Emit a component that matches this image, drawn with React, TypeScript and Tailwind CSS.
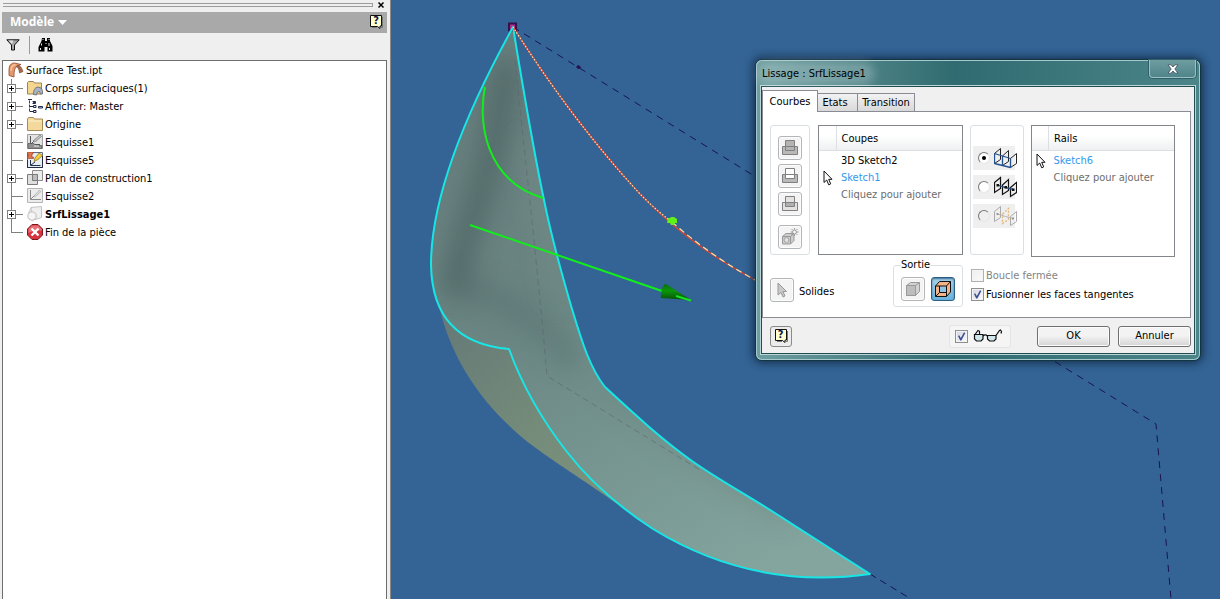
import React, { useState } from 'react';

type Kids = { children?: React.ReactNode };

/* ---------- shared controls ---------- */

function Tick({ label, checked, disabled, hidden }: { label: string; checked?: boolean; disabled?: boolean; hidden?: boolean }) {
  const [on, setOn] = useState(!!checked);
  return (
    <label className={disabled ? 'flex items-center gap-[2px] text-[#838383]' : 'flex items-center gap-[2px]'}>
      <span className="grid h-[13px] w-[13px] shrink-0">
        <input
          type="checkbox"
          aria-label={hidden ? label : undefined}
          checked={on}
          disabled={disabled}
          onChange={() => setOn(!on)}
          className="col-start-1 row-start-1 h-[13px] w-[13px] appearance-none border border-[#8e8f8f] bg-linear-to-br from-[#cfd3dc] to-white shadow-[inset_0_0_0_1px_#f4f4f4] disabled:border-[#b1b1b1] disabled:from-[#efefef] disabled:to-[#fafafa]"
        />
        {on && (
          <svg viewBox="0 0 13 13" className="pointer-events-none col-start-1 row-start-1 h-[13px] w-[13px]">
            <path d="M3 6l1.2-.8L5.800 8 9 2.300l1.300.6L6.400 10.500H5.200z" fill="#3c4e93" />
          </svg>
        )}
      </span>
      {!hidden && <span className="whitespace-nowrap">{label}</span>}
    </label>
  );
}

function ToolButton({ label, active, children }: Kids & { label: string; active?: boolean }) {
  return (
    <button
      type="button"
      aria-label={label}
      className={
        active
          ? 'flex h-6 w-6 shrink-0 items-center justify-center rounded-[3px] border border-[#2c5f87] bg-linear-to-b from-[#a9d2ea] to-[#68b3de] shadow-[inset_0_1px_2px_#3b6f95]'
          : 'flex h-6 w-6 shrink-0 items-center justify-center rounded-[3px] border border-[#b3b6b8] bg-[#f4f4f4] shadow-[inset_0_0_0_1px_#fcfcfc]'
      }
    >
      {children}
    </button>
  );
}

function HelpIcon() {
  return (
    <span className="grid h-4 w-[15px] shrink-0">
      <svg viewBox="0 0 15 16" className="col-start-1 row-start-1 h-4 w-[15px]">
        <path d="M1.500 1.500h11v10.500h-1.500v2.500L8.500 12.500h-7z" fill="#ffffcf" stroke="#111" />
        <path d="M13.500 3v10.500h-2M3 13.500h5" fill="none" stroke="#777" />
      </svg>
      <span className="col-start-1 row-start-1 pr-px text-center text-[11px] leading-[14px] font-bold text-[#111144]">?</span>
    </span>
  );
}

/* ---------- browser panel ---------- */

const icons = {
  surface: (
    <svg viewBox="0 0 16 16" className="h-4 w-4">
      <path d="M1 13.500V8C1 3.500 3 1 6.500 1L13 2.500 9.500 4C7 5 6 8 6 15z" fill="#e8976a" stroke="#8a4a2c" strokeWidth=".8" />
      <path d="M9.500 3.500C12 3.500 13.500 5 15 9.500l-3.500 1.500c-.5-3.500-1-5.500-3-6z" fill="#ae6a4b" stroke="#684030" strokeWidth=".6" />
      <path d="M3 9c0-4 1.500-6 4.500-6.500" fill="none" stroke="#f7c8a6" strokeWidth="1.300" />
    </svg>
  ),
  folderBody: (
    <svg viewBox="0 0 16 16" className="h-4 w-4">
      <path d="M.5 2.500l1-1h5l1 1.500h7v11H.5z" fill="#f4d68f" stroke="#9a8358" />
      <path d="M6.500 14.500c0-4 1-7 4.500-7.500l3 1c1.300 1.500 1.800 3 1.500 6h-2l-1-2.500c-2 0-2.500 1-3 3.500z" fill="#aab3c4" stroke="#5b6473" strokeWidth=".8" />
    </svg>
  ),
  view: (
    <svg viewBox="0 0 16 16" className="h-4 w-4">
      <path d="M2.500 2.500v10.500M9 4.500H6" fill="none" stroke="#333b52" strokeDasharray="3 1" />
      <path d="M1 1.500h4M5.500 3.500h3v2h-3M2.500 8.500h4M2.500 13.500h4" fill="none" stroke="#1f2a4c" />
      <path d="M6.500 7.500h2.500v2H6.500zM11.500 8.500h4v1.500h-4zM6.500 12.500h2.500v2H6.500z" fill="#dfe5f3" stroke="#1f2a4c" />
    </svg>
  ),
  folder: (
    <svg viewBox="0 0 16 16" className="h-4 w-4">
      <path d="M.5 3l1-1.500h5l1 1.500h8v11.500H.5z" fill="#f4d99c" stroke="#a78b57" />
      <path d="M1 5h14" stroke="#fdf0cc" />
    </svg>
  ),
  sketchUsed: (
    <svg viewBox="0 0 16 16" className="h-4 w-4">
      <path d="M.5.5h15v14H.5z" fill="#e3e3e3" stroke="#a0a0a0" />
      <path d="M3.500 2v8.500H13M3.500 10.500L9 5" fill="none" stroke="#555" />
      <path d="M6 7l7-6 1.500 1.500L8 8z" fill="#c4c4c4" stroke="#777" strokeWidth=".7" />
      <path d="M1 9.500h6l2 2h6v3H1z" fill="#8f8f8f" stroke="#555" strokeWidth=".7" />
      <path d="M7 12h5" stroke="#f0f0f0" />
    </svg>
  ),
  sketch3d: (
    <svg viewBox="0 0 16 16" className="h-4 w-4">
      <path d="M.5.5h15v15H.5z" fill="#e8ecf3" stroke="#606a80" />
      <path d="M3.500 8v5.500h10M4 13l4-3" fill="none" stroke="#203050" />
      <path d="M7 9.500l1-3.500 4-5 3.500 2.500L11 7.500z" fill="#f5cf3d" stroke="#8a6a14" strokeWidth=".7" />
      <path d="M0 0h6v2H5v3h1.500v1.500H0V5h1V2H0z" fill="#d9744e" stroke="#973c22" strokeWidth=".6" />
      <path d="M15.500 4v11.500H.5V8" fill="none" stroke="#222b40" />
    </svg>
  ),
  plane: (
    <svg viewBox="0 0 16 16" className="h-4 w-4">
      <path d="M5.500.5h10v10h-10z" fill="#ececec" stroke="#8d8d8d" />
      <path d="M.5 4.500h10v10H.5z" fill="#d6d6d6" fillOpacity=".8" stroke="#7a7a7a" />
      <path d="M5.500 4.500h5v6h-5z" fill="#bdbdbd" stroke="#7a7a7a" />
    </svg>
  ),
  sketchGrey: (
    <svg viewBox="0 0 16 16" className="h-4 w-4">
      <path d="M.5.500h15v14H.5z" fill="#ececec" stroke="#b4b4b4" />
      <path d="M3.500 2v9.500H14M3.500 11.500L8 7" fill="none" stroke="#8a8a8a" />
      <path d="M7 8l5.500-6L14 3.500 8.500 8.500z" fill="#dcdcdc" stroke="#aaa" strokeWidth=".7" />
    </svg>
  ),
  loft: (
    <svg viewBox="0 0 16 16" className="h-4 w-4">
      <path d="M4 1.500L14.500.500v11L10 13 5 14z" fill="#efefef" stroke="#c3c3c3" />
      <circle cx="5" cy="10" r="4.200" fill="#f5f5f5" stroke="#bcbcbc" />
      <path d="M1.500 7.500L4 1.500" stroke="#c9c9c9" />
    </svg>
  ),
  end: (
    <svg viewBox="0 0 16 16" className="h-4 w-4">
      <path d="M5 .5h6L15.500 5v6L11 15.500H5L.5 11V5z" fill="#d8323c" stroke="#7a1a20" />
      <path d="M5 1.500h6l3.500 3.500v2c-5-1-9 0-13 2V5z" fill="#ee8b8f" fillOpacity=".7" />
      <path d="M4.500 4.500l7 7M11.500 4.500l-7 7" stroke="#fff" strokeWidth="2.400" />
    </svg>
  ),
};

const tree: { label: string; icon: keyof typeof icons; expandable?: boolean; bold?: boolean }[] = [
  { label: 'Corps surfaciques(1)', icon: 'folderBody', expandable: true },
  { label: 'Afficher: Master', icon: 'view', expandable: true },
  { label: 'Origine', icon: 'folder', expandable: true },
  { label: 'Esquisse1', icon: 'sketchUsed' },
  { label: 'Esquisse5', icon: 'sketch3d' },
  { label: 'Plan de construction1', icon: 'plane', expandable: true },
  { label: 'Esquisse2', icon: 'sketchGrey' },
  { label: 'SrfLissage1', icon: 'loft', expandable: true, bold: true },
  { label: 'Fin de la pièce', icon: 'end' },
];

function Branch({ expandable, last }: { expandable?: boolean; last: boolean }) {
  return (
    <svg viewBox="0 0 24 18" className="h-[18px] w-6 shrink-0" shapeRendering="crispEdges">
      <path d={last ? 'M8.500 0v9.500H20' : 'M8.500 0v18M8.500 9.500H20'} fill="none" stroke="#808080" />
      {expandable && (
        <>
          <path d="M4.500 5.500h8v8h-8z" fill="#fff" stroke="#808080" />
          <path d="M6 9.500h5M8.500 7v5" stroke="#000" />
        </>
      )}
    </svg>
  );
}

function BrowserPanel() {
  return (
    <aside className="flex w-[391px] shrink-0 flex-col border-r border-[#8a8a8a] bg-[#efefef] pr-[3px] pl-[2px]">
      <div className="flex h-3 items-center gap-1 pr-[2px] pb-[3px] pl-px">
        <div className="h-1 flex-1 border-y border-r border-[#9c9c9c]" />
        <button type="button" aria-label="Fermer" className="flex h-2 w-2 items-center justify-center">
          <svg viewBox="0 0 8 8" className="h-2 w-2">
            <path d="M1.500 1.500l5 5M6.500 1.500l-5 5" stroke="#000" strokeWidth="1.500" />
          </svg>
        </button>
      </div>
      <div className="flex h-[21px] items-center justify-between bg-[#a9a9a9] pr-[3px] pb-px pl-2 text-white">
        <button type="button" className="flex items-center gap-1 font-['Open_Sans',sans-serif] text-[12px] leading-4 font-bold">
          Modèle
          <svg viewBox="0 0 9 5" className="h-[5px] w-[9px]">
            <path d="M0 0h9L4.500 5z" fill="#fff" />
          </svg>
        </button>
        <button type="button" aria-label="Aide" className="text-black">
          <HelpIcon />
        </button>
      </div>
      <div className="flex h-[27px] items-center pb-1 pl-1">
        <button type="button" aria-label="Filtrer">
          <svg viewBox="0 0 14 12" className="h-3 w-[14px]">
            <path d="M.8.800h12.400L8.500 6v5h-3V6z" fill="#a4a4a4" stroke="#111" />
            <path d="M2.500 1.500h5L6 5z" fill="#e0e0e0" />
          </svg>
        </button>
        <div className="ml-[9px] h-[18px] w-px bg-[#9a9a9a]" />
        <button type="button" aria-label="Rechercher" className="ml-2">
          <svg viewBox="0 0 16 14" className="h-[14px] w-4">
            <path d="M4 0h3v3h2V0h3v3l2.500 5v5.500H9.500V9h-3v4.500H.5V9L3.500 3z" fill="#000" />
            <path d="M4.500 1.500h1M10.500 1.500h1M3.500 5.500v2M11 5v3M2.500 10v2M11.500 10v2M7.500 5.500h1" stroke="#e5e5e5" />
          </svg>
        </button>
      </div>
      <div className="flex-1 border border-b-0 border-[#6e6e6e] bg-white">
        <div className="flex h-[18px] items-center gap-[2px] pl-[5px]">
          {icons.surface}
          <span className="pt-[2px]">Surface Test.ipt</span>
        </div>
        <ul>
          {tree.map((n, i) => (
            <li key={n.label} className="flex h-[18px] items-center">
              <Branch expandable={n.expandable} last={i === tree.length - 1} />
              {icons[n.icon]}
              <span className={n.bold ? 'pt-[2px] pl-[2px] font-bold' : 'pt-[2px] pl-[2px]'}>{n.label}</span>
            </li>
          ))}
        </ul>
      </div>
    </aside>
  );
}

/* ---------- 3D scene ---------- */

const upper =
  'M513 27C470 105 431 195 431 265C432 320 462 345 509 349C522 385 542 420 567 452C595 488 630 514 653 529C725 573 800 584 870 574L767 508C740 491 716 478 692 461C660 438 632 412 605 387C590 368 582 342 572 309C562 275 552 240 544 200C533 148 523 88 513 27Z';

function Scene() {
  return (
    <svg viewBox="391 0 829 599" preserveAspectRatio="xMinYMin slice" className="h-full w-full" role="img" aria-label="Surface lissée">
      <defs>
        <linearGradient id="top" gradientUnits="userSpaceOnUse" x1="470" y1="120" x2="780" y2="560">
          <stop offset="0" stopColor="#677f7e" />
          <stop offset=".35" stopColor="#6a8582" />
          <stop offset=".65" stopColor="#769590" />
          <stop offset="1" stopColor="#84a49e" />
        </linearGradient>
        <linearGradient id="belly" gradientUnits="userSpaceOnUse" x1="445" y1="330" x2="590" y2="490">
          <stop offset="0" stopColor="#667b77" />
          <stop offset=".6" stopColor="#748b7a" />
          <stop offset="1" stopColor="#7b917c" />
        </linearGradient>
        <linearGradient id="cone" x1="0" y1="0" x2="0" y2="1">
          <stop offset="0" stopColor="#0a6e0a" />
          <stop offset=".45" stopColor="#0b960b" />
          <stop offset="1" stopColor="#064f06" />
        </linearGradient>
        <filter id="soft" filterUnits="userSpaceOnUse" x="391" y="0" width="600" height="599">
          <feGaussianBlur stdDeviation="12" />
        </filter>
        <clipPath id="topClip">
          <path d={upper} />
        </clipPath>
      </defs>
      <path d="M513 27L1156 424L1171 599" fill="none" stroke="#1a1450" strokeDasharray="7 6" />
      <path d="M870 574L911 599" fill="none" stroke="#1a1450" strokeDasharray="7 5" />
      <path d="M438 300C450 365 492 415 533 446C560 466 590 484 630 513L600 470L509 345Z" fill="url(#belly)" />
      <path d={upper} fill="url(#top)" />
      <g clipPath="url(#topClip)">
        <path d="M507 60C500 120 490 170 470 225C462 250 456 270 455 295" fill="none" stroke="#48605f" strokeWidth="26" opacity=".65" filter="url(#soft)" />
        <path d="M455 285C495 290 540 320 575 365" fill="none" stroke="#4d6668" strokeWidth="20" opacity=".4" filter="url(#soft)" />
        <path d="M530 140C538 200 548 250 562 300" fill="none" stroke="#7a948f" strokeWidth="14" opacity=".5" filter="url(#soft)" />
        <path d="M605 385L692 455L790 520" fill="none" stroke="#667d77" strokeWidth="12" opacity=".5" filter="url(#soft)" />
        <path d="M515 60C522 130 530 200 535 250C540 300 544 340 547 376L700 470" fill="none" stroke="#5d6470" strokeDasharray="6 4" opacity=".6" />
      </g>
      <path d="M509 23.500h7v7h-7z" fill="#a8328c" stroke="#36104a" strokeWidth="2" />
      <path d={upper} fill="none" stroke="#18e6e6" strokeWidth="2" strokeLinejoin="round" />
      <path d="M485 87C478 120 484 180 543 198" fill="none" stroke="#12ee1c" strokeWidth="2" />
      <path d="M513 27C550 85 590 140 640 194C675 230 710 256 757 281" fill="none" stroke="#d8452f" strokeWidth="1.400" />
      <path d="M513 27C550 85 590 140 640 194C650 204 661 214 672 222" fill="none" stroke="#fbe9b0" strokeWidth="1.200" strokeDasharray="1.500 1.700" />
      <path d="M672 222C697 244 725 264 757 281" fill="none" stroke="#fbe9b0" strokeWidth="1.200" strokeDasharray="6 4" />
      <path d="M576 67l2-2 2 1 1 2-3 1z" fill="#2a1050" />
      <path d="M668 218h2l1-1h3l3 2v4h-2l-1 2h-3l-1-2h-3z" fill="#5df01a" />
      <path d="M470 225L662 291" stroke="#12ee1c" strokeWidth="2" />
      <path d="M665 283.500L691 300L661 298Q660 290 665 283.500Z" fill="url(#cone)" />
      <path d="M676 296L691 300.500" stroke="#19e222" strokeWidth="2" />
    </svg>
  );
}

/* ---------- dialog ---------- */

function GroupBox({ children, className = '' }: Kids & { className?: string }) {
  return <div className={'rounded-[3px] border border-[#d9e0e4] ' + className}>{children}</div>;
}

function PieceIcon({ top, bottom, overlap }: { top: string; bottom: string; overlap: string }) {
  return (
    <svg viewBox="0 0 16 16" className="h-4 w-4">
      <path d="M.5 6.500h15v8H.5z" fill={bottom} stroke="#808080" />
      <path d="M3.500.5h9v6h-9z" fill={top} stroke="#808080" />
      <path d="M3.500 6.500h9v4h-9z" fill={overlap} stroke="#808080" />
    </svg>
  );
}

function PickCursor() {
  return (
    <svg viewBox="0 0 10 16" className="h-4 w-[10px]">
      <path d="M1 1v11.500l2.700-2.500 2 4.800 2-.9-2-4.600H9z" fill="#fff" stroke="#111" />
    </svg>
  );
}

function CurveList({ title, rows, pick, tall }: { title: string; rows: { text: string; tone: string }[]; pick: number; tall?: boolean }) {
  return (
    <div className={tall ? 'h-[132px] flex-1 border border-[#82858a] bg-white' : 'h-[130px] flex-1 border border-[#82858a] bg-white'}>
      <table className="w-full border-collapse text-left">
        <thead>
          <tr className="h-6 bg-linear-to-b from-white from-40% to-[#eff0f2]">
            <td className="w-[17px] border-r border-b border-[#dcdfe3] p-0" />
            <th scope="col" className="border-b border-[#dcdfe3] p-0 pt-[2px] pl-[5px] font-normal">{title}</th>
          </tr>
        </thead>
        <tbody>
          <tr className="h-[2px]">
            <td className="p-0" />
            <td className="p-0" />
          </tr>
          {rows.map((r, i) => (
            <tr key={r.text} className="h-[17px]">
              <td className="p-0 pl-1">{i === pick && <span className="flex h-[17px] items-center"><PickCursor /></span>}</td>
              <td className={'p-0 pl-[5px] leading-[17px] whitespace-nowrap ' + r.tone}>{r.text}</td>
            </tr>
          ))}
        </tbody>
      </table>
    </div>
  );
}

function Mode({ id, label, disabled, checked, onPick, children }: Kids & { id: string; label: string; disabled?: boolean; checked: boolean; onPick: () => void }) {
  return (
    <label htmlFor={id} className="flex h-6 items-center gap-[4px] bg-[#efefef] pl-[5px]">
      <span className="grid h-3 w-3 shrink-0">
        <input
          id={id}
          type="radio"
          name="mode"
          aria-label={label}
          checked={checked}
          disabled={disabled}
          onChange={onPick}
          className="col-start-1 row-start-1 h-3 w-3 appearance-none rounded-full border border-t-[#777] border-r-[#e6e6e6] border-b-[#e6e6e6] border-l-[#777] bg-white disabled:bg-[#efefef]"
        />
        {checked && <span className="pointer-events-none col-start-1 row-start-1 m-1 rounded-full bg-black" />}
      </span>
      <svg viewBox="0 0 23 22" className="h-[22px] w-[23px] shrink-0">
        {children}
      </svg>
    </label>
  );
}

const outerFrames = 'M.5 6.500L6.500 1.500V12.500L.5 16.500ZM16.500 11.500L22.500 6.500V16.500L16.500 20.500Z';
const middleFrame = 'M8.500 9L14.500 3.500V14.500L8.500 18.500Z';

function TabPage() {
  const [mode, setMode] = useState(0);
  return (
    <div className="h-[207px] border border-[#898c95] bg-white pt-[13px] pr-[15px] pl-[7px]" role="tabpanel">
      <div className="flex items-start">
        <GroupBox className="mr-2 flex h-[130px] w-10 shrink-0 flex-col items-center pt-[10px]">
          <div className="flex flex-col gap-[4px]">
            <ToolButton label="Joindre"><PieceIcon top="#b4b4b4" bottom="#b9b9b9" overlap="#b4b4b4" /></ToolButton>
            <ToolButton label="Couper"><PieceIcon top="#fff" bottom="#b9b9b9" overlap="#fff" /></ToolButton>
            <ToolButton label="Intersection"><PieceIcon top="#e2e2e2" bottom="#e2e2e2" overlap="#b0b0b0" /></ToolButton>
          </div>
          <div className="mt-[9px]">
            <ToolButton label="Nouveau solide">
              <svg viewBox="0 0 18 18" className="h-[18px] w-[18px]">
                <path d="M1.500 8.500L5 5.500h8v7L9.500 16h-8z" fill="#cdcdcd" stroke="#999" />
                <path d="M1.500 8.500h8V16M9.500 8.500L13 5.500" fill="none" stroke="#999" />
                <circle cx="5.500" cy="12" r="2.500" fill="#e0e0e0" stroke="#a5a5a5" />
                <circle cx="13.500" cy="4" r="2" fill="#f4f4f4" stroke="#9a9a9a" />
                <path d="M13.500 0v1.500M13.500 6.500V8M9.500 4H11M16 4h1.500M10.500 1l1 1M16.500 1l-1 1M16.500 7l-1-1M10.500 7l1-1" stroke="#9a9a9a" />
              </svg>
            </ToolButton>
          </div>
        </GroupBox>
        <CurveList
          title="Coupes"
          pick={1}
          rows={[
            { text: '3D Sketch2', tone: 'text-black' },
            { text: 'Sketch1', tone: 'text-[#3399ee]' },
            { text: 'Cliquez pour ajouter', tone: 'text-[#6d6d6d]' },
          ]}
        />
        <GroupBox className="mx-[7px] flex h-[130px] w-[54px] shrink-0 flex-col gap-[5px] pt-[20px] pr-2 pl-[2px]">
          <Mode id="m1" label="Rails" checked={mode === 0} onPick={() => setMode(0)}>
            <path d={outerFrames} fill="none" stroke="#222" />
            <path d={middleFrame} fill="none" stroke="#222" />
            <path d="M.5 6.500l8 2.500 8 2.500M.5 16.500l8 2 8 2M.5 6.500v10M8.500 9v9.500M16.500 11.500v9" fill="none" stroke="#24518f" strokeWidth="1.300" />
          </Mode>
          <Mode id="m2" label="Ligne médiane" checked={mode === 1} onPick={() => setMode(1)}>
            <path d={outerFrames} fill="none" stroke="#111" strokeWidth="1.200" />
            <path d={middleFrame} fill="none" stroke="#111" strokeWidth="1.200" />
            <path d="M3.500 9l8 2.500 8 2" fill="none" stroke="#24518f" strokeWidth="1.300" />
            <path d="M2.500 8h2.500v2.500H2.500zM10.500 10h2.500v2.500h-2.500zM18 12.500h2.500V15H18z" fill="#111" />
          </Mode>
          <Mode id="m3" label="Lissage de zone" disabled checked={mode === 2} onPick={() => setMode(2)}>
            <path d={outerFrames} fill="none" stroke="#ababab" />
            <path d={middleFrame} fill="none" stroke="#e5b77c" strokeWidth="1.300" strokeDasharray="2 1.500" />
            <path d="M3.500 9l8 2.500 8 2" fill="none" stroke="#b5b5b5" />
            <path d="M2.500 8h2v2h-2zM18 12.500h2v2h-2z" fill="#999" />
          </Mode>
        </GroupBox>
        <CurveList
          title="Rails"
          pick={0}
          tall
          rows={[
            { text: 'Sketch6', tone: 'text-[#3399ee]' },
            { text: 'Cliquez pour ajouter', tone: 'text-[#6d6d6d]' },
          ]}
        />
      </div>
      <div className="mt-px flex items-start">
        <div className="flex w-[123px] shrink-0 items-center gap-[5px] pt-5">
          <ToolButton label="Sélectionner les solides">
            <svg viewBox="0 0 14 16" className="h-4 w-[14px]">
              <path d="M3 1v12l3-2.500 2 4.500 2-1-2-4.500h3.500z" fill="#c9c9c9" stroke="#999" />
            </svg>
          </ToolButton>
          <span className="pt-[3px]">Solides</span>
        </div>
        <fieldset className="mr-2 h-[49px] w-[68px] shrink-0 rounded-[3px] border border-[#d9e0e4] px-[7px]">
          <legend className="h-[14px] leading-[14px]">Sortie</legend>
          <div className="flex gap-[6px] pt-[5px]">
            <ToolButton label="Solide">
              <svg viewBox="0 0 18 18" className="h-[18px] w-[18px]">
                <path d="M2.500 5.500l4-3h9v9l-4 4h-9z" fill="#d2d2d2" stroke="#999" />
                <path d="M2.500 5.500h9v10h-9z" fill="#bdbdbd" stroke="#999" />
                <path d="M11.500 5.500l4-3" stroke="#999" />
              </svg>
            </ToolButton>
            <ToolButton label="Surface" active>
              <svg viewBox="0 0 18 18" className="h-[18px] w-[18px]">
                <path d="M1.500 6l4-4.500h11V12l-4 4.500h-11z" fill="#f4b487" stroke="#111" />
                <path d="M5.500 6.500h7v6H5z" fill="#8fc4e6" />
                <path d="M1.500 6h11v10.500M12.500 6l4-4.500M5.500 6v6.500h7M5.500 12.500l-4 4" fill="none" stroke="#111" />
              </svg>
            </ToolButton>
          </div>
        </fieldset>
        <div className="flex flex-col gap-[6px] pt-[11px] leading-[13px]">
          <Tick label="Boucle fermée" disabled />
          <Tick label="Fusionner les faces tangentes" checked />
        </div>
      </div>
    </div>
  );
}

const pushButton =
  'h-[21px] w-[73px] rounded-[3px] border border-[#707070] bg-linear-to-b from-[#f3f3f3] from-45% to-[#d4d4d4] shadow-[inset_0_0_0_1px_#fbfbfb]';

const rearTab = 'h-[18px] border border-b-0 border-l-0 border-[#898c95] bg-linear-to-b from-[#f2f2f2] to-[#d9d9d9] leading-[17px] ';

function LoftDialog() {
  return (
    <section
      aria-label="Lissage : SrfLissage1"
      className="absolute top-[59px] left-[364px] w-[446px] rounded-[7px] border border-[#12353f] bg-[#357176] bg-linear-to-r from-[#6e9ea0] via-[#2f6b70] via-45% to-[#4b858a] shadow-[0_0_8px_2px_rgba(10,25,50,0.7)]"
    >
      <div className="rounded-[6px] px-[4px] pb-[5px] shadow-[inset_0_0_0_1px_#a5c9cc]">
        <header className="flex h-[25px] items-start justify-between pl-[2px]">
          <h1 className="mt-[6px] rounded-full bg-white/20 pr-1 leading-[15px] shadow-[0_0_8px_5px_rgba(255,255,255,0.2)]">Lissage : SrfLissage1</h1>
          <button
            type="button"
            aria-label="Fermer la boîte de dialogue"
            className="flex h-[18px] w-[47px] items-center justify-center rounded-b-[4px] border border-t-0 border-[#9dc0c4] bg-linear-to-b from-[#6f9da0] to-[#4e858b] shadow-[0_0_0_1px_#2f5f68]"
          >
            <svg viewBox="0 0 12 10" className="h-[10px] w-3">
              <path d="M1 .8h3L6 3 8 .8h3L7.800 5 11 9.200H8L6 7 4 9.200H1L4.200 5z" fill="#fff" stroke="#3f4b59" strokeWidth=".8" />
            </svg>
          </button>
        </header>
        <div className="border border-[#bcd6d8]">
          <div className="border border-[#1f4b53] bg-[#f0f0f0] pt-[3px] pr-[3px]">
            <div role="tablist" className="flex items-end">
              <button type="button" role="tab" aria-selected="true" className="-mb-px h-[22px] w-[56px] border border-b-0 border-[#898c95] bg-white">
                Courbes
              </button>
              <button type="button" role="tab" aria-selected="false" className={rearTab + 'w-[40px] pr-[5px]'}>
                Etats
              </button>
              <button type="button" role="tab" aria-selected="false" className={rearTab + 'w-[57px]'}>
                Transition
              </button>
            </div>
            <TabPage />
            <footer className="flex h-[35px] items-center pt-px pl-2">
              <button type="button" aria-label="Aide" className="flex h-[21px] w-[22px] items-center justify-center rounded-[3px] border border-[#8a8a8a] bg-[#ececec]">
                <HelpIcon />
              </button>
              <div className="flex-1" />
              <div className="mr-[26px] flex h-[23px] w-[62px] items-center gap-[5px] rounded-[3px] border border-[#e2e4e6] bg-[#f5f5f5] pl-[5px]">
                <Tick label="Aperçu" checked hidden />
                <svg viewBox="0 0 30 16" className="h-4 w-[30px]">
                  <path d="M1.500 6.500h8.500v4.500l-2 2h-4.500l-2-2zM14.500 7.500h8.500v3.500l-2 2h-4.500l-2-2z" fill="#cfe6ea" stroke="#111" strokeWidth="1.200" />
                  <path d="M10 8c1.500-1.500 3-1.500 4.500 0M2 6.500L5 2.500l1.500.8v3M23 7.500l3.500-5 1-.5 1 1.500-.5 2" fill="none" stroke="#111" strokeWidth="1.200" />
                </svg>
              </div>
              <button type="button" className={'mr-2 ' + pushButton}>OK</button>
              <button type="button" className={pushButton}>Annuler</button>
            </footer>
          </div>
        </div>
      </div>
    </section>
  );
}

export default function App() {
  return (
    <div className="flex h-screen overflow-hidden font-['DejaVu_Sans_Condensed','DejaVu_Sans',sans-serif] text-[11px] leading-[14px] text-black">
      <BrowserPanel />
      <main className="relative min-w-0 flex-1 overflow-hidden bg-[#336495]">
        <Scene />
        <LoftDialog />
      </main>
    </div>
  );
}
